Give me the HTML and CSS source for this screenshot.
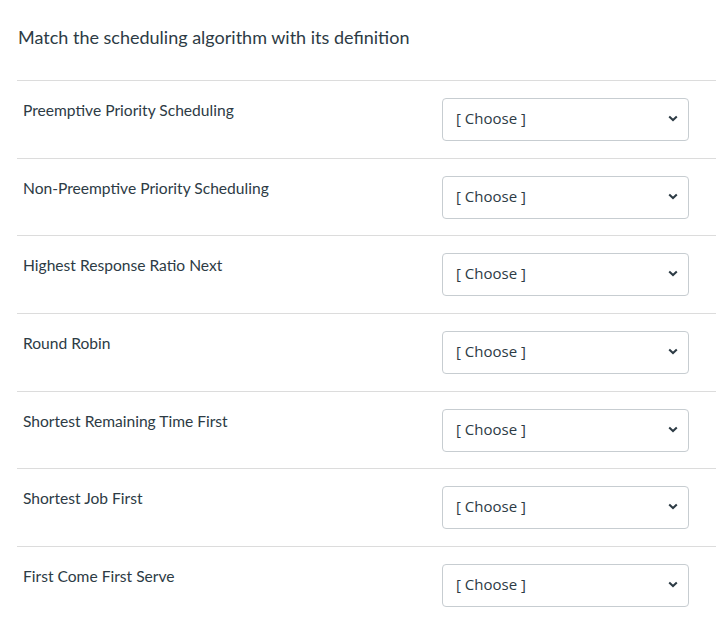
FILE: index.html
```html
<!DOCTYPE html>
<html>
<head>
<meta charset="utf-8">
<link rel="stylesheet" href="styles.css">
</head>
<body>
<div class="question">
  <div class="title">Match the scheduling algorithm with its definition</div>
  <div class="rows">
    <div class="row"><div class="label">Preemptive Priority Scheduling</div><div class="select"><span>[ Choose ]</span><svg class="chev" width="10" height="7" viewBox="0 0 10 7"><path d="M1.2 1.4 L5 5 L8.8 1.4" fill="none" stroke="#2d3b45" stroke-width="2"/></svg></div></div>
    <div class="row"><div class="label">Non-Preemptive Priority Scheduling</div><div class="select"><span>[ Choose ]</span><svg class="chev" width="10" height="7" viewBox="0 0 10 7"><path d="M1.2 1.4 L5 5 L8.8 1.4" fill="none" stroke="#2d3b45" stroke-width="2"/></svg></div></div>
    <div class="row"><div class="label">Highest Response Ratio Next</div><div class="select"><span>[ Choose ]</span><svg class="chev" width="10" height="7" viewBox="0 0 10 7"><path d="M1.2 1.4 L5 5 L8.8 1.4" fill="none" stroke="#2d3b45" stroke-width="2"/></svg></div></div>
    <div class="row"><div class="label">Round Robin</div><div class="select"><span>[ Choose ]</span><svg class="chev" width="10" height="7" viewBox="0 0 10 7"><path d="M1.2 1.4 L5 5 L8.8 1.4" fill="none" stroke="#2d3b45" stroke-width="2"/></svg></div></div>
    <div class="row"><div class="label">Shortest Remaining Time First</div><div class="select"><span>[ Choose ]</span><svg class="chev" width="10" height="7" viewBox="0 0 10 7"><path d="M1.2 1.4 L5 5 L8.8 1.4" fill="none" stroke="#2d3b45" stroke-width="2"/></svg></div></div>
    <div class="row"><div class="label">Shortest Job First</div><div class="select"><span>[ Choose ]</span><svg class="chev" width="10" height="7" viewBox="0 0 10 7"><path d="M1.2 1.4 L5 5 L8.8 1.4" fill="none" stroke="#2d3b45" stroke-width="2"/></svg></div></div>
    <div class="row"><div class="label">First Come First Serve</div><div class="select"><span>[ Choose ]</span><svg class="chev" width="10" height="7" viewBox="0 0 10 7"><path d="M1.2 1.4 L5 5 L8.8 1.4" fill="none" stroke="#2d3b45" stroke-width="2"/></svg></div></div>
  </div>
</div>
</body>
</html>
```
FILE: styles.css
```css
html, body {
  margin: 0;
  padding: 0;
  background: #ffffff;
}
body {
  font-family: Lato, "Liberation Sans", sans-serif;
  color: #2d3b45;
}
.question {
  padding: 0 0 0 17px;
}
.title {
  font-size: 18px;
  line-height: 24px;
  padding: 25px 0 0 1px;
  height: 80px;
  box-sizing: border-box;
}
.row {
  border-top: 1px solid #dcdcdc;
  height: 77.67px;
  box-sizing: border-box;
  display: flex;
  justify-content: space-between;
  align-items: flex-start;
  padding-left: 6px;
  padding-right: 27px;
}
.label {
  font-size: 15.6px;
  line-height: 20px;
  padding-top: 19px;
}
.select {
  margin-top: 17px;
  width: 247px;
  height: 43px;
  box-sizing: border-box;
  border: 1px solid #c7cdd1;
  border-radius: 4px;
  display: flex;
  align-items: center;
  justify-content: space-between;
  padding: 0 10px 3px 13px;
  font-family: "Open Sans", sans-serif;
  font-size: 15px;
  color: #2d3b45;
}
.chev {
  display: block;
  margin-top: 1px;
}
```
